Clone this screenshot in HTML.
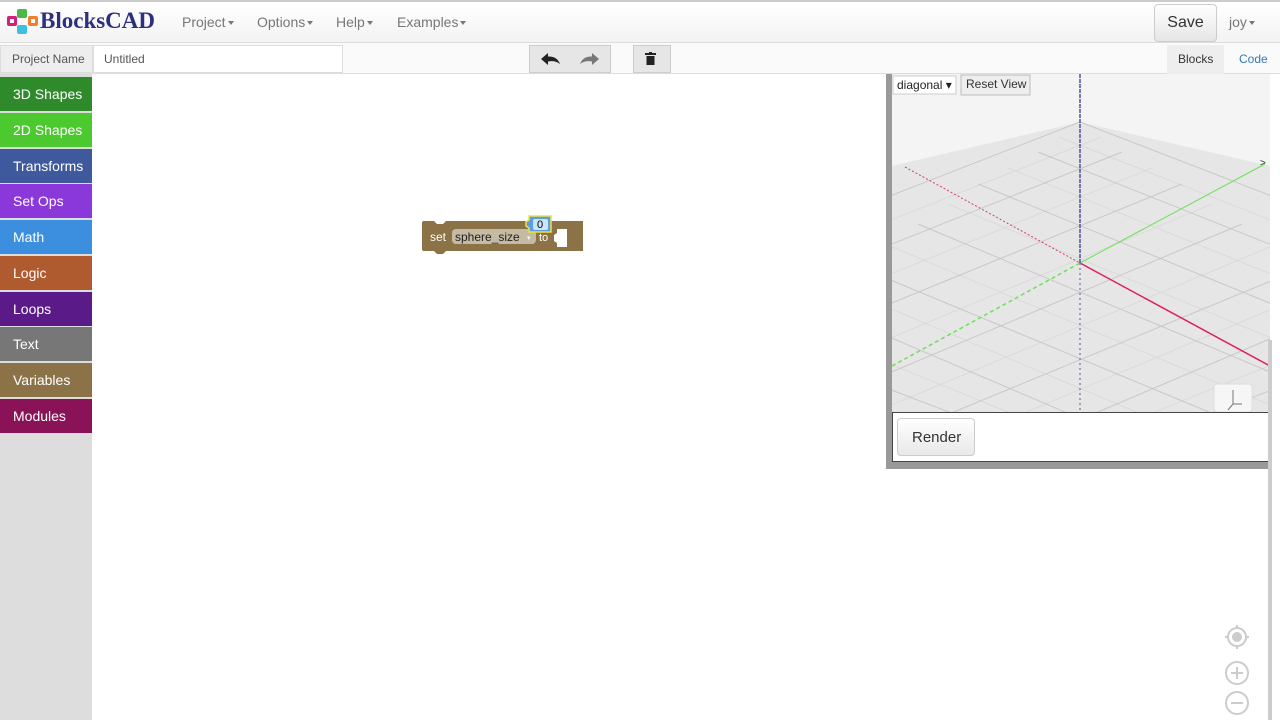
<!DOCTYPE html>
<html><head><style>
*{margin:0;padding:0;box-sizing:border-box}
body{width:1280px;height:720px;overflow:hidden;background:#fff;font-family:"Liberation Sans",sans-serif;position:relative}
.nav{position:absolute;top:0;left:0;width:1280px;height:43px;background:linear-gradient(#fff,#f3f3f3);border-top:2px solid #ccc;border-bottom:1px solid #ddd}
.nav .m{position:absolute;top:12px;font-size:14px;color:#777}
.tb{position:absolute;top:43px;left:0;width:1280px;height:31px;background:#fafafa;border-bottom:1px solid #ddd}
.pal{position:absolute;top:74px;left:0;width:92px;height:646px;background:#ddd}
.pal div{position:absolute;left:0;width:92px;height:34px;color:#fff;font-size:14px;padding:9px 0 0 13px}
.caret{display:inline-block;border-top:4px solid #777;border-left:3px solid transparent;border-right:3px solid transparent;vertical-align:middle;margin-left:2px}
</style></head><body>
<div class="nav">
 <svg style="position:absolute;left:6px;top:6px" width="34" height="30"><rect x="1" y="8" width="10" height="10" rx="2" fill="#d0217a"/><rect x="11" y="1" width="10" height="9" rx="2" fill="#4cb848"/><rect x="22" y="8" width="10" height="10" rx="2" fill="#f08030"/><rect x="11" y="17" width="10" height="9" rx="2" fill="#3cc0e0"/><rect x="4" y="11" width="4" height="4" fill="#fff"/><rect x="25" y="11" width="4" height="4" fill="#fff"/></svg>
 <div style="position:absolute;left:40px;top:6px;font-family:'Liberation Serif',serif;font-weight:bold;font-size:23px;color:#2d2f7f">BlocksCAD</div>
 <div class="m" style="left:182px">Project<span class="caret"></span></div>
 <div class="m" style="left:257px">Options<span class="caret"></span></div>
 <div class="m" style="left:336px">Help<span class="caret"></span></div>
 <div class="m" style="left:397px">Examples<span class="caret"></span></div>
 <div style="position:absolute;left:1154px;top:2px;width:63px;height:38px;border:1px solid #ccc;border-radius:4px;background:linear-gradient(#fff,#e6e6e6);font-size:16px;color:#333;text-align:center;padding-top:9px">Save</div>
 <div class="m" style="left:1229px">joy<span class="caret"></span></div>
</div>
<div class="tb">
 <div style="position:absolute;left:0;top:2px;width:93px;height:28px;background:#eee;border:1px solid #ddd;font-size:12px;color:#555;padding:6px 0 0 11px">Project Name</div>
 <div style="position:absolute;left:93px;top:2px;width:250px;height:28px;background:#fff;border:1px solid #ddd;font-size:12px;color:#555;padding:6px 0 0 10px">Untitled</div>
 <div style="position:absolute;left:529px;top:2px;width:82px;height:28px;background:#e6e6e6;border:1px solid #ccc"></div>
 <svg style="position:absolute;left:539px;top:8px" width="64" height="16"><path d="M2 8 L9 2 L9 5.5 Q18 5 21 13 Q16 9 9 10.5 L9 14 Z" fill="#222"/><path d="M60 8 L53 2 L53 5.5 Q44 5 41 13 Q46 9 53 10.5 L53 14 Z" fill="#777"/></svg>
 <div style="position:absolute;left:633px;top:2px;width:38px;height:28px;background:#e6e6e6;border:1px solid #ccc"></div>
 <svg style="position:absolute;left:645px;top:9px" width="12" height="14"><rect x="0" y="1" width="11" height="2" fill="#222"/><rect x="4" y="0" width="3" height="2" fill="#222"/><rect x="1.5" y="4" width="8" height="9" fill="#222"/></svg>
 <div style="position:absolute;left:1167px;top:2px;width:57px;height:29px;background:#eee;font-size:12px;color:#333;padding:7px 0 0 11px">Blocks</div>
 <div style="position:absolute;left:1239px;top:9px;font-size:12px;color:#337ab7">Code</div>
</div>
<div class="pal">
 <div style="top:3px;background:#2f8a2b">3D Shapes</div>
 <div style="top:39px;background:#4bc92f">2D Shapes</div>
 <div style="top:75px;background:#3f5a9c">Transforms</div>
 <div style="top:110px;background:#8a38d9">Set Ops</div>
 <div style="top:146px;background:#3c8fdf">Math</div>
 <div style="top:182px;background:#b05a30">Logic</div>
 <div style="top:218px;background:#5a1a87">Loops</div>
 <div style="top:253px;background:#777">Text</div>
 <div style="top:289px;background:#8b7347">Variables</div>
 <div style="top:325px;background:#8a1358">Modules</div>
</div>
<svg style="position:absolute;left:420px;top:212px" width="170" height="45">
 <path d="M4 9 h10 l3 3 h6 l3 -3 h137 v30 h-137 l-3 3 h-6 l-3 -3 h-10 q-2 0 -2 -2 v-26 q0 -2 2 -2z" fill="#8b7347"/>
 <rect x="32" y="17" width="84" height="15" rx="4" fill="#c5baa3"/>
 <text x="10" y="29" font-family="Liberation Sans" font-size="12" fill="#fff">set</text>
 <text x="35" y="29" font-family="Liberation Sans" font-size="12" fill="#222">sphere_size</text>
 <text x="107" y="28" font-family="Liberation Sans" font-size="7" fill="#fff">▾</text>
 <text x="119" y="29" font-family="Liberation Sans" font-size="11" fill="#fff">to</text>
 <path d="M137 17 h10 v18 h-10 v-4 l-3 -2 v-6 l3 -2z" fill="#fff"/>
 <path d="M109 4 h22 v16 h-22 v-4 l-3 -2 v-4 l3 -2z" fill="#5aa0e0" stroke="#f0e040" stroke-width="1.5"/>
 <rect x="113" y="7" width="15" height="11" rx="2" fill="#cce4f8"/>
 <text x="117" y="16" font-family="Liberation Sans" font-size="11" fill="#000">0</text>
</svg>
<div style="position:absolute;left:886px;top:74px;width:384px;height:395px;background:#999"></div>
<svg style="position:absolute;left:892px;top:74px" width="378" height="338">
 <rect width="378" height="338" fill="#f4f4f4"/>
 <path d="M0 92 L188 48 L378 92 V338 H0Z" fill="#e6e6e6"/>
 <g stroke="#dadada" stroke-width="1">
  <path d="M-100 185 L209 63 M-100 240 L260 94 M-100 305 L320 130 M-70 360 L385 170 M10 390 L440 210 M110 400 L480 250 M205 400 L510 290 M300 400 L530 330"/>
  <path d="M478 185 L167 63 M478 240 L116 94 M478 305 L56 130 M448 360 L-7 170 M368 390 L-60 210 M268 400 L-100 250 M173 400 L-130 290 M78 400 L-150 330"/>
 </g>
 <g stroke="#c8c8c8" stroke-width="1">
  <path d="M-100 160 L188 48 M-100 210 L230 78 M-100 270 L290 110 M-100 340 L350 150 M-40 380 L420 190 M60 400 L460 230 M160 400 L500 270 M250 400 L520 310"/>
  <path d="M478 160 L188 48 M478 210 L146 78 M478 270 L86 110 M478 340 L26 150 M418 380 L-40 190 M318 400 L-80 230 M218 400 L-120 270 M128 400 L-140 310"/>
 </g>
 <path d="M13 93 L188 189" stroke="#d04060" stroke-dasharray="2 2" stroke-width="1"/>
 <path d="M188 189 L378 292" stroke="#e0205a" stroke-width="1.5"/>
 <path d="M0 292 L188 189" stroke="#6ee05a" stroke-dasharray="4 3" stroke-width="1.5"/>
 <path d="M188 189 L373 90" stroke="#6ee05a" stroke-width="1"/>
 <path d="M188 0 V189" stroke="#5050a0" stroke-dasharray="4 1" stroke-width="1.5"/>
 <path d="M188 189 V338" stroke="#8888a8" stroke-dasharray="2 3" stroke-width="1.5"/>
 <text x="368" y="92" font-size="10" fill="#333" font-family="Liberation Sans">&gt;</text>
 <rect x="322" y="310" width="38" height="28" rx="3" fill="#f6f6f6" stroke="#ddd"/>
 <path d="M341 316 V330 H350 M341 330 L336 336" stroke="#777" fill="none"/>
 <rect x="1" y="2" width="63" height="18" fill="#fff" stroke="#ccc"/>
 <text x="5" y="15" font-size="12" fill="#222" font-family="Liberation Sans">diagonal ▾</text>
 <rect x="69" y="1" width="69" height="20" fill="#eee" stroke="#bbb"/>
 <text x="74" y="14" font-size="12" fill="#333" font-family="Liberation Sans">Reset View</text>
</svg>
<div style="position:absolute;left:892px;top:412px;width:378px;height:50px;background:#fff;border:1px solid #444"></div>
<div style="position:absolute;left:897px;top:418px;width:78px;height:38px;border:1px solid #ccc;border-radius:4px;background:linear-gradient(#fff,#e8e8e8);font-size:15px;color:#333;padding:10px 0 0 14px">Render</div>
<div style="position:absolute;left:1268px;top:340px;width:4px;height:380px;background:#ccc"></div>
<svg style="position:absolute;left:1222px;top:622px" width="32" height="98" stroke="#ccc" fill="none" stroke-width="2">
 <circle cx="15" cy="15" r="9"/><circle cx="15" cy="15" r="4" fill="#ccc"/><path d="M15 3 v4 M15 23 v4 M3 15 h4 M23 15 h4"/>
 <circle cx="15" cy="51" r="11"/><path d="M9 51 h12 M15 45 v12"/>
 <circle cx="15" cy="81" r="11"/><path d="M9 81 h12"/>
</svg>
</body></html>
